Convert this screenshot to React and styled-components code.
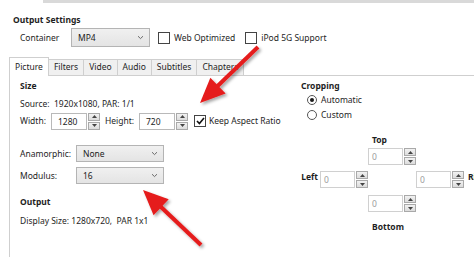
import React from 'react';
import styled, { createGlobalStyle } from 'styled-components';

const GlobalStyle = createGlobalStyle`
  html, body {
    margin: 0;
    padding: 0;
    background: #ffffff;
  }
  body {
    font-family: "Noto Sans", "DejaVu Sans", sans-serif;
    font-size: 8.5px;
    color: #1e1e1e;
    overflow: hidden;
  }
`;

const Page = styled.div`
  position: relative;
  width: 474px;
  height: 257px;
  overflow: hidden;
  background: #ffffff;
`;

const TopBar = styled.div`
  height: 3px;
  margin-left: 43px;
  background: #d9d9d9;
`;

const Heading = styled.div`
  font-weight: 700;
  height: 12px;
  line-height: 12px;
  white-space: nowrap;
`;

const Settings = styled.div`
  padding-left: 13px;
  margin-top: 11px;
`;

const Row = styled.div`
  display: flex;
  align-items: center;
  height: ${(p) => p.h || 12}px;
  margin-top: ${(p) => p.mt || 0}px;
  padding-left: ${(p) => p.pl || 0}px;
  white-space: nowrap;
`;

const Label = styled.span`
  display: inline-block;
  width: ${(p) => (p.w ? `${p.w}px` : 'auto')};
  margin-left: ${(p) => p.ml || 0}px;
  margin-right: ${(p) => p.mr || 0}px;
  line-height: 12px;
  white-space: nowrap;
`;

const SelectBox = styled.div`
  box-sizing: border-box;
  width: ${(p) => p.w}px;
  height: ${(p) => p.h}px;
  display: flex;
  align-items: center;
  justify-content: space-between;
  padding: 0 5px 0 6px;
  border: 1px solid #b4b4b4;
  background: linear-gradient(#f0f0f0, #e4e4e4);
  color: #222;
`;

const Check = styled.span`
  box-sizing: border-box;
  width: 12px;
  height: 12px;
  margin-left: ${(p) => p.ml || 0}px;
  border: 1px solid #444;
  background: #fff;
  display: inline-flex;
  align-items: center;
  justify-content: center;
  flex-shrink: 0;
`;

const TabBar = styled.div`
  display: flex;
  align-items: flex-end;
  height: 18px;
  margin-top: 10px;
  padding-left: 9px;
`;

const Tab = styled.div`
  box-sizing: border-box;
  position: relative;
  height: ${(p) => (p.active ? 19 : 16)}px;
  margin-bottom: ${(p) => (p.active ? -1 : 0)}px;
  margin-right: -1px;
  padding: ${(p) => (p.active ? '3px' : '1px')} 5px 0;
  border: 1px solid #cfcfcf;
  border-bottom: none;
  background: ${(p) => (p.active ? '#ffffff' : '#f0f0f0')};
  z-index: ${(p) => (p.active ? 1 : 0)};
  line-height: 12px;
  white-space: nowrap;
`;

const Panel = styled.div`
  display: flex;
  margin-left: 9px;
  padding: 4px 0 0 10px;
  height: 200px;
  border-top: 1px solid #cfcfcf;
  border-left: 1px solid #cfcfcf;
`;

const LeftCol = styled.div`
  width: 281px;
  flex-shrink: 0;
`;

const RightCol = styled.div`
  flex-shrink: 0;
`;

const TextInput = styled.div`
  box-sizing: border-box;
  width: ${(p) => p.w}px;
  height: 17px;
  padding-left: ${(p) => (p.muted ? 3 : 6)}px;
  border: 1px solid ${(p) => (p.muted ? '#d0d0d0' : '#b9b9b9')};
  background: #fff;
  color: ${(p) => (p.muted ? '#9c9c9c' : '#1e1e1e')};
  line-height: 15px;
`;

const SpinWrap = styled.div`
  display: flex;
  flex-direction: column;
  justify-content: space-between;
  width: ${(p) => p.w}px;
  height: 17px;
  margin-left: 1px;
`;

const SpinBtn = styled.div`
  box-sizing: border-box;
  height: 8px;
  border: 1px solid #a9a9a9;
  background: linear-gradient(#f2f2f2, #dcdcdc);
  display: flex;
  align-items: center;
  justify-content: center;
`;

const Radio = styled.span`
  box-sizing: border-box;
  width: 10px;
  height: 10px;
  margin-right: 4px;
  border-radius: 50%;
  border: 1px solid #555;
  background: #fff;
  display: inline-flex;
  align-items: center;
  justify-content: center;
  &::after {
    content: '';
    width: 4px;
    height: 4px;
    border-radius: 50%;
    background: ${(p) => (p.checked ? '#1a1a1a' : 'transparent')};
  }
`;

const CropGrid = styled.div`
  display: grid;
  grid-template-columns: 66px 48px auto;
  grid-template-rows: 14px 23px 24px 26px 12px;
  margin-top: 13px;
  margin-left: 1px;
`;

const Cell = styled.div`
  grid-column: ${(p) => p.col};
  grid-row: ${(p) => p.row};
  display: flex;
  align-items: flex-start;
  justify-content: ${(p) => p.justify || 'flex-start'};
  padding-left: ${(p) => p.pl || 0}px;
  white-space: nowrap;
  line-height: 12px;
`;

const CropLabel = styled.span`
  font-weight: 700;
  line-height: 12px;
`;

const Overlay = styled.svg`
  position: absolute;
  top: 0;
  left: 0;
  pointer-events: none;
`;

const Chevron = () => (
  <svg width="7" height="5" viewBox="0 0 7 5">
    <path d="M1 1.2 L3.5 3.6 L6 1.2" fill="none" stroke="#6a6a6a" strokeWidth="1" />
  </svg>
);

const Select = ({ w, h, value }) => (
  <SelectBox w={w} h={h}>
    <span>{value}</span>
    <Chevron />
  </SelectBox>
);

const Spinner = ({ w = 12 }) => (
  <SpinWrap w={w}>
    <SpinBtn>
      <svg width="5" height="3" viewBox="0 0 5 3">
        <path d="M0 3 L2.5 0 L5 3 Z" fill="#444" />
      </svg>
    </SpinBtn>
    <SpinBtn>
      <svg width="5" height="3" viewBox="0 0 5 3">
        <path d="M0 0 L2.5 3 L5 0 Z" fill="#444" />
      </svg>
    </SpinBtn>
  </SpinWrap>
);

const SpinBox = ({ value, w = 36, spinW = 12, muted }) => (
  <Row h={17}>
    <TextInput w={w} muted={muted}>{value}</TextInput>
    <Spinner w={spinW} />
  </Row>
);

const CheckMark = () => (
  <svg width="9" height="8" viewBox="0 0 9 8">
    <path d="M1 4 L3.4 6.6 L8 1" fill="none" stroke="#111" strokeWidth="1.6" />
  </svg>
);

const Arrow = ({ tail, tip }) => {
  const dx = tip[0] - tail[0];
  const dy = tip[1] - tail[1];
  const len = Math.hypot(dx, dy);
  const ux = dx / len;
  const uy = dy / len;
  const L = 25;
  const W = 11;
  const bx = tip[0] - ux * L;
  const by = tip[1] - uy * L;
  const nx = -uy;
  const ny = ux;
  const pts = `${tip[0]},${tip[1]} ${bx + nx * W},${by + ny * W} ${bx - nx * W},${by - ny * W}`;
  return (
    <g filter="url(#shadow)">
      <line x1={tail[0]} y1={tail[1]} x2={bx + ux * 2} y2={by + uy * 2} stroke="#e51b1b" strokeWidth="4" />
      <polygon points={pts} fill="#e51b1b" />
    </g>
  );
};

const tabs = ['Picture', 'Filters', 'Video', 'Audio', 'Subtitles', 'Chapters'];

export default function App() {
  return (
    <Page>
      <GlobalStyle />
      <TopBar />
      <Settings>
        <Heading>Output Settings</Heading>
        <Row h={19} mt={2} pl={7}>
          <Label w={51}>Container</Label>
          <Select w={79} h={19} value="MP4" />
          <Check ml={8} />
          <Label ml={4}>Web Optimized</Label>
          <Check ml={10} />
          <Label ml={4}>iPod 5G Support</Label>
        </Row>
      </Settings>

      <TabBar>
        {tabs.map((t, i) => (
          <Tab key={t} active={i === 0}>{t}</Tab>
        ))}
      </TabBar>

      <Panel>
        <LeftCol>
          <Heading>Size</Heading>
          <Row mt={6}>
            <Label w={34}>Source:</Label>
            <Label>1920x1080, PAR: 1/1</Label>
          </Row>
          <Row h={18} mt={2}>
            <Label w={31}>Width:</Label>
            <SpinBox value="1280" />
            <Label w={34} ml={5}>Height:</Label>
            <SpinBox value="720" />
            <Check ml={6}>
              <CheckMark />
            </Check>
            <Label ml={3}>Keep Aspect Ratio</Label>
          </Row>
          <Row h={17} mt={15}>
            <Label w={56}>Anamorphic:</Label>
            <Select w={88} h={17} value="None" />
          </Row>
          <Row h={17} mt={5}>
            <Label w={56}>Modulus:</Label>
            <Select w={88} h={17} value="16" />
          </Row>
          <Heading style={{ marginTop: 12 }}>Output</Heading>
          <Row mt={7}>
            <Label>Display Size: 1280x720,&nbsp; PAR 1x1</Label>
          </Row>
        </LeftCol>

        <RightCol>
          <Heading>Cropping</Heading>
          <Row mt={2} pl={6}>
            <Radio checked />
            <Label>Automatic</Label>
          </Row>
          <Row mt={3} pl={6}>
            <Radio />
            <Label>Custom</Label>
          </Row>
          <CropGrid>
            <Cell col={2} row={1} pl={4}>
              <CropLabel>Top</CropLabel>
            </Cell>
            <Cell col={2} row={2}>
              <SpinBox value="0" w={35} muted />
            </Cell>
            <Cell col={1} row={3} justify="flex-end">
              <CropLabel style={{ marginRight: 2 }}>Left</CropLabel>
              <SpinBox value="0" w={35} muted />
            </Cell>
            <Cell col={3} row={3}>
              <SpinBox value="0" w={35} muted />
              <CropLabel style={{ marginLeft: 4 }}>Right</CropLabel>
            </Cell>
            <Cell col={2} row={4}>
              <SpinBox value="0" w={35} muted />
            </Cell>
            <Cell col={2} row={5} pl={4}>
              <CropLabel>Bottom</CropLabel>
            </Cell>
          </CropGrid>
        </RightCol>
      </Panel>

      <Overlay width="474" height="257" viewBox="0 0 474 257">
        <defs>
          <filter id="shadow" x="-20%" y="-20%" width="140%" height="140%">
            <feDropShadow dx="2" dy="2" stdDeviation="1.5" floodColor="#000" floodOpacity="0.35" />
          </filter>
        </defs>
        <Arrow tail={[258, 47]} tip={[200, 103]} />
        <Arrow tail={[201, 245]} tip={[143, 190]} />
      </Overlay>
    </Page>
  );
}
